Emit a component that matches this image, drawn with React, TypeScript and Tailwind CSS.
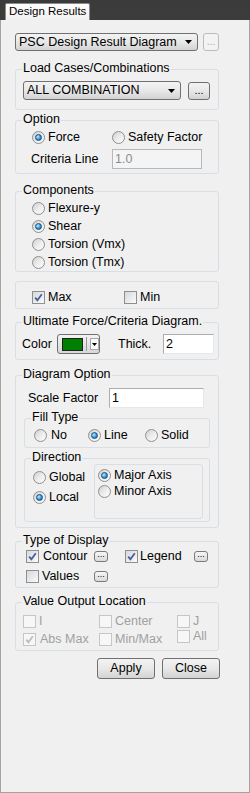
import React from 'react';

const Radio = ({ on }: { on?: boolean }) => (
  <span className="inline-flex w-[13px] h-[13px] shrink-0 items-center justify-center rounded-full border border-[#8e8f8f] bg-gradient-to-br from-[#cfcfcf] via-[#ececec] to-[#fdfdfd]">
    {on && (
      <span className="w-[7px] h-[7px] rounded-full border border-[#1b4f7e] bg-[radial-gradient(circle_at_35%_35%,#c4ecff,#3396dc_55%,#0e5596)]" />
    )}
  </span>
);

const Check = ({ on, dis }: { on?: boolean; dis?: boolean }) => (
  <span
    className={`inline-flex w-[13px] h-[13px] shrink-0 items-center justify-center border ${
      dis ? 'border-[#c6c6c6] bg-[#f7f7f7]' : 'border-[#8e8f8f] bg-gradient-to-br from-[#d6d8db] to-[#fbfbfb]'
    }`}
  >
    {on && (
      <svg width="9" height="9" viewBox="0 0 9 9">
        <path d="M1.2 4.6 L3.4 7.2 L7.8 1.3" fill="none" stroke={dis ? '#bcbcbc' : '#475f99'} strokeWidth="1.8" />
      </svg>
    )}
  </span>
);

const Group = ({ label, className = '', children }: { label?: string; className?: string; children: React.ReactNode }) => (
  <fieldset className={`border border-[#d5dfe5] rounded-[3px] ${className}`}>
    {label && <legend className="ml-[6px] px-[1px] pb-[2px] leading-[14px]">{label}</legend>}
    {children}
  </fieldset>
);

const Arrow = () => (
  <svg width="7" height="4" viewBox="0 0 7 4" className="shrink-0">
    <path d="M0 0 H7 L3.5 4 Z" fill="#000" />
  </svg>
);

const Combo = ({ text, className = '' }: { text: string; className?: string }) => (
  <div
    className={`flex items-center justify-between pl-[3px] pr-[5px] border border-[#707070] rounded-[3px] bg-gradient-to-b from-[#f3f3f3] via-[#e8e8e8] to-[#d3d3d3] ${className}`}
  >
    <span className="leading-none whitespace-nowrap">{text}</span>
    <Arrow />
  </div>
);

const Btn = ({ children, className = '' }: { children: React.ReactNode; className?: string }) => (
  <div
    className={`flex items-center justify-center border border-[#707070] rounded-[3px] bg-gradient-to-b from-[#f3f3f3] via-[#e8e8e8] to-[#d3d3d3] leading-none ${className}`}
  >
    {children}
  </div>
);

const Dots = () => (
  <div className="flex w-[14px] h-[11px] items-end justify-center pb-[2px] border border-[#7a7a7a] rounded-[3px] bg-gradient-to-b from-[#f6f6f6] to-[#dadada] text-[9px] leading-none">
    ...
  </div>
);

const Opt = ({ on, label, gap = 'gap-[3px]', className = '' }: { on?: boolean; label: string; gap?: string; className?: string }) => (
  <div className={`flex items-center ${gap} ${className}`}>
    <Radio on={on} />
    <span className="leading-none whitespace-nowrap">{label}</span>
  </div>
);

const Box = ({ on, dis, label, gap = 'gap-[3px]', className = '' }: { on?: boolean; dis?: boolean; label: string; gap?: string; className?: string }) => (
  <div className={`flex items-center ${gap} ${className}`}>
    <Check on={on} dis={dis} />
    <span className={`leading-none whitespace-nowrap ${dis ? 'text-[#a0a0a0]' : ''}`}>{label}</span>
  </div>
);

const Field = ({ value, className = '', dis }: { value: string; className?: string; dis?: boolean }) => (
  <div
    className={`flex items-center h-[20px] pl-[2px] border ${
      dis ? 'border-[#b5b9bd] bg-[#f4f4f4] text-[#8d8d8d]' : 'border-[#abadb3] border-b-[#e3e9ef] border-r-[#e3e9ef] bg-white'
    } leading-none ${className}`}
  >
    {value}
  </div>
);

export default function App() {
  return (
    <div className="w-[250px] h-[793px] flex flex-col bg-gradient-to-b from-[#3b3b3b] to-[#5d5d5d] text-[12.5px] text-black font-['Liberation_Sans',Arial,sans-serif]">
      {/* tab strip */}
      <div className="h-[20px] flex items-end pl-[5px]">
        <div className="h-[17px] w-[85px] flex items-center pl-[3px] border border-b-0 border-[#8a8a8a] rounded-t-[2px] bg-gradient-to-b from-[#ffffff] to-[#f0f0f0] text-[11.5px] leading-none whitespace-nowrap">
          Design Results
        </div>
      </div>

      {/* panel */}
      <div className="flex-1 bg-[#f0f0f0] border border-t-0 border-[#a3a3a3]">
        <div className="ml-[14px] w-[204px] flex flex-col">
          {/* main combo */}
          <div className="mt-[13px] flex gap-[5px]">
            <Combo text="PSC Design Result Diagram" className="w-[183px] h-[18px]" />
            <div className="w-[16px] h-[18px] flex items-end justify-center pb-[3px] border border-[#b9bdc1] rounded-[3px] bg-[#f3f3f3] text-[#a9a9a9] text-[10px] leading-none">
              ...
            </div>
          </div>

          <Group label="Load Cases/Combinations" className="mt-[10px]">
            <div className="pt-[4px] pb-[9px] pl-[7px] flex items-start gap-[7px]">
              <Combo text="ALL COMBINATION" className="w-[158px] h-[19px]" />
              <Btn className="mt-[1px] w-[22px] h-[18px] items-end pb-[3px] text-[11px]">...</Btn>
            </div>
          </Group>

          <Group label="Option" className="mt-[2px]">
            <div className="pt-[1px] pb-[4px] flex flex-col">
              <div className="h-[16px] pl-[16px] flex items-center">
                <Opt on label="Force" className="w-[80px]" />
                <Opt label="Safety Factor" />
              </div>
              <div className="mt-[4px] pl-[15px] flex items-center">
                <span className="w-[81px] leading-none">Criteria Line</span>
                <Field dis value="1.0" className="w-[90px]" />
              </div>
            </div>
          </Group>

          <Group label="Components" className="mt-[9px]">
            <div className="pl-[16px] flex flex-col">
              <Opt label="Flexure-y" className="h-[18px]" />
              <Opt on label="Shear" className="h-[18px]" />
              <Opt label="Torsion (Vmx)" className="h-[18px]" />
              <Opt label="Torsion (Tmx)" className="h-[18px]" />
            </div>
          </Group>

          <Group className="mt-[9px]">
            <div className="pt-[7px] pb-[3px] pl-[16px] h-[26px] flex items-start">
              <Box on label="Max" className="w-[92px] h-[16px]" />
              <Box label="Min" className="h-[16px]" />
            </div>
          </Group>

          <Group label="Ultimate Force/Criteria Diagram." className="mt-[5px]">
            <div className="pt-[4px] pb-[5px] pl-[6px] flex items-center">
              <span className="w-[35px] leading-none">Color</span>
              <div className="w-[43px] h-[20px] flex items-center pl-[4px] gap-[3px] border border-[#707070] rounded-[3px] bg-gradient-to-b from-[#f3f3f3] to-[#d8d8d8]">
                <span className="w-[22px] h-[13px] border border-[#202020] bg-[#008000]" />
                <span className="w-[1px] h-[14px] bg-[#9a9a9a]" />
                <span className="w-[9px] h-[12px] flex items-center justify-center border border-[#a8a8a8] bg-[#fafafa]">
                  <svg width="5" height="3" viewBox="0 0 5 3">
                    <path d="M0 0 H5 L2.5 3 Z" fill="#000" />
                  </svg>
                </span>
              </div>
              <span className="ml-[18px] w-[45px] leading-none">Thick.</span>
              <Field value="2" className="w-[51px]" />
            </div>
          </Group>

          <Group label="Diagram Option" className="mt-[7px]">
            <div className="px-[8px] pt-[5px] pb-[5px] flex flex-col">
              <div className="pl-[4px] flex items-center">
                <span className="w-[81px] leading-none">Scale Factor</span>
                <Field value="1" className="w-[95px]" />
              </div>

              <Group label="Fill Type" className="mt-[2px]">
                <div className="pt-[1px] pb-[4px] pl-[9px] h-[21px] flex items-start">
                  <Opt label="No" gap="gap-[4px]" className="w-[54px] h-[16px]" />
                  <Opt on label="Line" className="w-[57px] h-[16px]" />
                  <Opt label="Solid" className="h-[16px]" />
                </div>
              </Group>

              <Group label="Direction" className="mt-[2px]">
                <div className="-mt-[2px] pb-[2px] flex">
                  <div className="w-[69px] pl-[8px] pt-[5px] flex flex-col gap-[4px]">
                    <Opt label="Global" className="h-[16px]" />
                    <Opt on label="Local" className="h-[16px]" />
                  </div>
                  <div className="w-[109px] h-[55px] pt-[2px] pl-[3px] border border-[#d5dfe5] rounded-[3px] flex flex-col">
                    <Opt on label="Major Axis" className="h-[16px]" />
                    <Opt label="Minor Axis" className="h-[16px]" />
                  </div>
                </div>
              </Group>
            </div>
          </Group>

          <Group label="Type of Display" className="mt-[5px]">
            <div className="pb-[4px] pl-[10px] flex flex-col">
              <div className="h-[14px] flex items-center">
                <Box on label="Contour" gap="gap-[4px]" className="w-[68px]" />
                <Dots />
                <div className="w-[17px]" />
                <Box on label="Legend" gap="gap-[2px]" className="w-[69px]" />
                <Dots />
              </div>
              <div className="mt-[6px] h-[14px] flex items-center">
                <Box label="Values" className="w-[68px]" />
                <Dots />
              </div>
            </div>
          </Group>

          <Group label="Value Output Location" className="mt-[6px]">
            <div className="pt-[4px] pb-[4px] pl-[7px] flex flex-col">
              <div className="h-[14px] flex items-center">
                <Box dis label="I" className="w-[76px]" />
                <Box dis label="Center" className="w-[78px]" />
                <Box dis label="J" />
              </div>
              <div className="mt-[4px] h-[14px] flex items-center">
                <Box dis on label="Abs Max" gap="gap-[4px]" className="w-[76px]" />
                <Box dis label="Min/Max" className="w-[78px]" />
                <Box dis label="All" className="self-start -mt-[3px] h-[14px]" />
              </div>
            </div>
          </Group>

          <div className="mt-[7px] -mr-[1px] flex justify-end gap-[7px]">
            <Btn className="w-[58px] h-[21px]">Apply</Btn>
            <Btn className="w-[58px] h-[21px]">Close</Btn>
          </div>
        </div>
      </div>
    </div>
  );
}
